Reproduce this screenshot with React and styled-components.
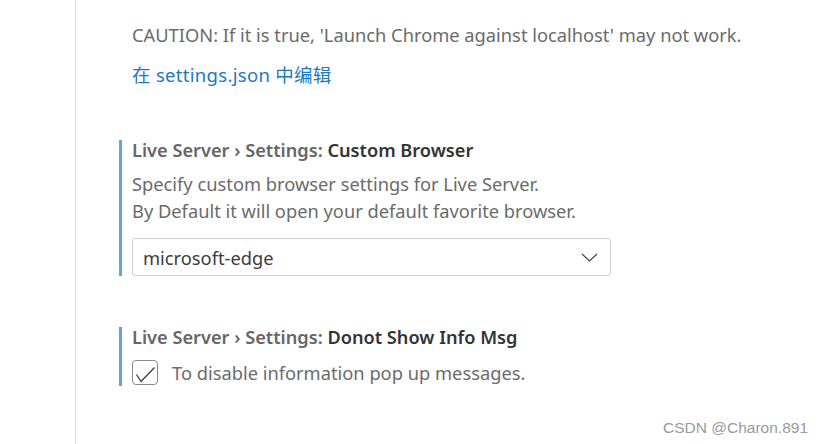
import React from "react";
import styled, { createGlobalStyle } from "styled-components";

const Global = createGlobalStyle`
  html, body { margin: 0; padding: 0; background: #ffffff; }
  body { font-family: "Noto Sans", "Noto Sans CJK SC", sans-serif; overflow: hidden; }
`;

const Page = styled.div`
  position: relative;
  display: flex;
  width: 823px;
  height: 444px;
  background: #fff;
`;

const Gutter = styled.div`
  width: 75px;
  flex: none;
  border-right: 1px solid #e2e2e2;
`;

const Content = styled.div`
  flex: 1;
  display: flex;
  flex-direction: column;
  padding-left: 43px;
  padding-top: ${p => p.$top}px;
`;

const Setting = styled.div`
  display: flex;
  flex-direction: column;
  border-left: 3px solid ${p => (p.$focused ? "#5fa6dc" : "transparent")};
  padding-left: 10px;
  margin-top: ${p => p.$mt || 0}px;
`;

const Desc = styled.div`
  font-size: 18.3px;
  line-height: 27px;
  color: #6b6b6b;
  white-space: nowrap;
`;

const Link = styled.a`
  font-size: 18.5px;
  line-height: 26px;
  color: #2377bf;
  text-decoration: none;
  margin-top: 14px;
  white-space: nowrap;
  letter-spacing: 0.3px;
`;

const Title = styled.div`
  font-size: 18.2px;
  line-height: 20px;
  font-weight: 600;
  color: #666666;
  white-space: nowrap;
  margin-bottom: ${p => p.$mb || 0}px;
`;

const Key = styled.span`
  color: #333333;
`;

const Select = styled.div`
  margin-top: 14px;
  width: 479px;
  height: 38px;
  box-sizing: border-box;
  border: 1px solid #cecece;
  border-radius: 3px;
  display: flex;
  align-items: center;
  justify-content: space-between;
  padding: 0 12px 0 10px;
  font-size: 18.3px;
  color: #3c3c3c;
`;

const CheckRow = styled.div`
  display: flex;
  align-items: center;
  gap: 14px;
`;

const Box = styled.div`
  width: 26px;
  height: 25px;
  box-sizing: border-box;
  border: 1px solid #8a8a8a;
  border-radius: 4px;
  display: flex;
  align-items: center;
  justify-content: center;
`;

const CheckLabel = styled.span`
  font-size: 18.3px;
  line-height: 27px;
  color: #6b6b6b;
  white-space: nowrap;
`;

const Watermark = styled.div`
  position: absolute;
  right: 15px;
  bottom: 7px;
  font-family: "Liberation Sans", Arial, sans-serif;
  font-size: 15.5px;
  color: #9a9a9a;
`;

export default function App() {
  return (
    <>
      <Global />
      <Page>
        <Gutter />
        <Content $top={21}>
          <Setting>
            <Desc>CAUTION: If it is true, 'Launch Chrome against localhost' may not work.</Desc>
            <Link href="#">在 settings.json 中编辑</Link>
          </Setting>
          <Setting $focused $mt={52}>
            <Title $mb={10}>
              Live Server › Settings: <Key>Custom Browser</Key>
            </Title>
            <Desc>
              Specify custom browser settings for Live Server.
              <br />
              By Default it will open your default favorite browser.
            </Desc>
            <Select>
              <span>microsoft-edge</span>
              <svg width="17" height="9" viewBox="0 0 17 9">
                <path d="M1 1 L8.5 8 L16 1" fill="none" stroke="#424242" strokeWidth="1.2" />
              </svg>
            </Select>
          </Setting>
          <Setting $focused $mt={51}>
            <Title $mb={12}>
              Live Server › Settings: <Key>Donot Show Info Msg</Key>
            </Title>
            <CheckRow>
              <Box>
                <svg width="24" height="24" viewBox="0 0 24 24">
                  <path d="M3.5 13.5 L8 20.5 L21.5 6.5" fill="none" stroke="#3a3a3a" strokeWidth="1.3" />
                </svg>
              </Box>
              <CheckLabel>To disable information pop up messages.</CheckLabel>
            </CheckRow>
          </Setting>
        </Content>
        <Watermark>CSDN @Charon.891</Watermark>
      </Page>
    </>
  );
}
